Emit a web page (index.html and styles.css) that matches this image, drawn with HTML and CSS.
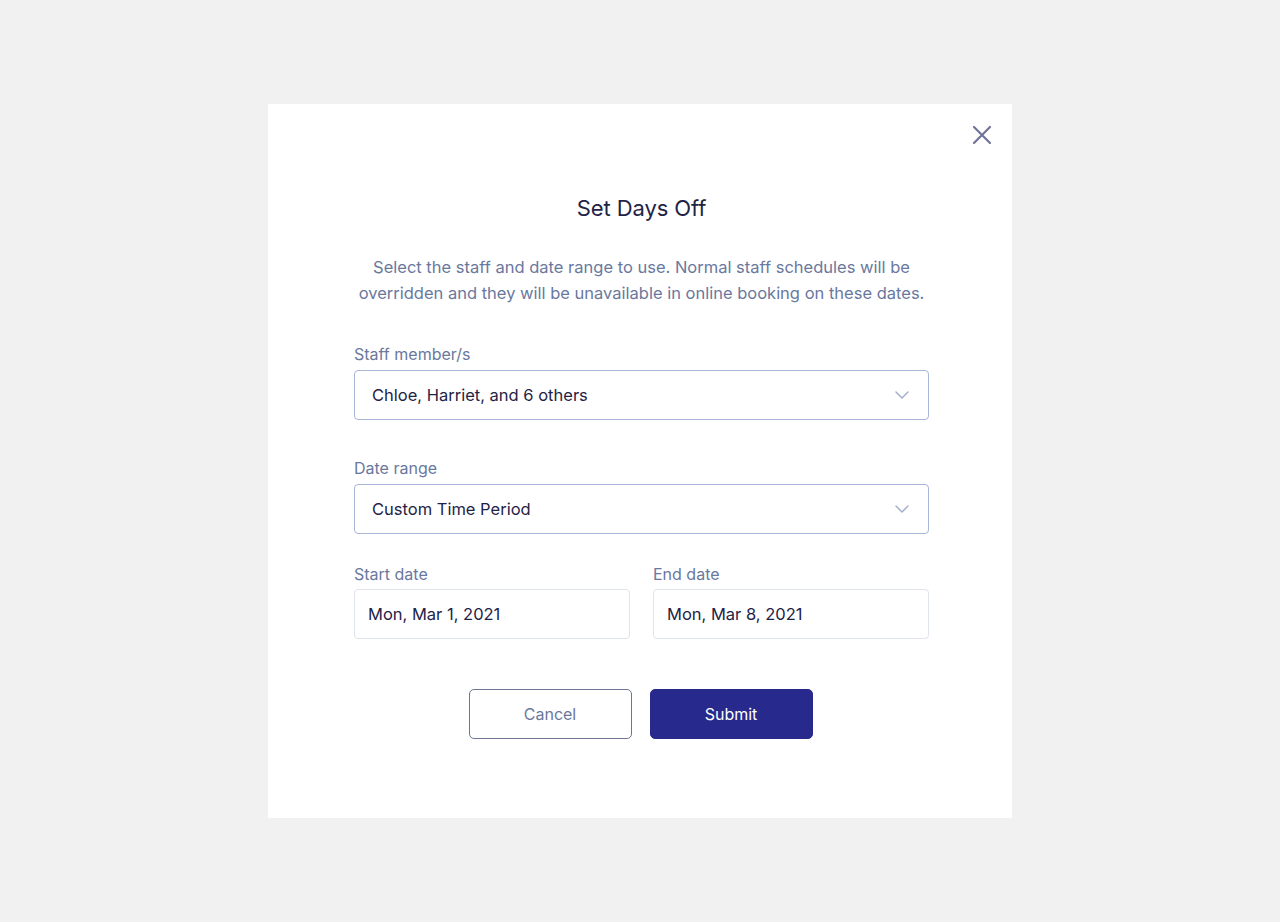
FILE: index.html
```html
<!DOCTYPE html>
<html lang="en">
<head>
<meta charset="utf-8">
<title>Set Days Off</title>
<link rel="stylesheet" href="styles.css">
</head>
<body>
<div class="page">
  <div class="modal">
    <button class="close" aria-label="Close">
      <svg width="20" height="20" viewBox="0 0 20 20"><path d="M2 2 L18 18 M18 2 L2 18" stroke="#6e7496" stroke-width="2.2" stroke-linecap="round" fill="none"/></svg>
    </button>
    <h1 class="title">Set Days Off</h1>
    <p class="desc">Select the staff and date range to use. Normal staff schedules will be overridden and they will be unavailable in online booking on these dates.</p>
    <div class="form">
      <div class="field">
        <label class="label">Staff member/s</label>
        <div class="select">
          <span>Chloe, Harriet, and 6 others</span>
          <svg class="chev" width="14" height="8" viewBox="0 0 14 8"><path d="M1 1 L7 7 L13 1" stroke="#a4b0cc" stroke-width="1.5" fill="none" stroke-linecap="round" stroke-linejoin="round"/></svg>
        </div>
      </div>
      <div class="field">
        <label class="label">Date range</label>
        <div class="select">
          <span>Custom Time Period</span>
          <svg class="chev" width="14" height="8" viewBox="0 0 14 8"><path d="M1 1 L7 7 L13 1" stroke="#a4b0cc" stroke-width="1.5" fill="none" stroke-linecap="round" stroke-linejoin="round"/></svg>
        </div>
      </div>
      <div class="dates">
        <div class="field">
          <label class="label label-date">Start date</label>
          <div class="input">Mon, Mar 1, 2021</div>
        </div>
        <div class="field">
          <label class="label label-date">End date</label>
          <div class="input">Mon, Mar 8, 2021</div>
        </div>
      </div>
    </div>
    <div class="actions">
      <button class="btn btn-cancel">Cancel</button>
      <button class="btn btn-submit">Submit</button>
    </div>
  </div>
</div>
</body>
</html>
```
FILE: styles.css
```css
* { box-sizing: border-box; }
html, body { margin: 0; padding: 0; }
body {
  background: #f1f1f1;
  font-family: "Inter", "Noto Sans", "Liberation Sans", sans-serif;
  color: #1f2346;
}
.page {
  width: 1280px;
  height: 922px;
  padding-top: 104px;
  display: flex;
  justify-content: center;
  align-items: flex-start;
}
.modal {
  position: relative;
  width: 744px;
  height: 714px;
  background: #ffffff;
  padding: 86px 83px 0 86px;
}
.close {
  position: absolute;
  top: 21px;
  right: 20px;
  width: 20px;
  height: 20px;
  padding: 0;
  border: 0;
  background: transparent;
  cursor: pointer;
}
.close svg { display: block; }
.title {
  margin: 0;
  font-size: 22px;
  font-weight: 400;
  line-height: 36px;
  text-align: center;
  color: #1f2346;
  letter-spacing: -0.1px;
}
.desc {
  margin: 28px 0 0;
  font-size: 16.5px;
  line-height: 26px;
  text-align: center;
  color: #6a789e;
}
.form {
  margin-top: 38px;
  display: flex;
  flex-direction: column;
  gap: 38px;
}
.field {
  display: flex;
  flex-direction: column;
}
.label {
  font-size: 16px;
  line-height: 20px;
  color: #6a789e;
  margin-bottom: 6px;
}
.label-date { margin-bottom: 5px; }
.select {
  height: 50px;
  border: 1px solid #a9b6d8;
  border-radius: 4px;
  display: flex;
  align-items: center;
  justify-content: space-between;
  padding: 0 19px 0 17px;
  font-size: 16.5px;
  color: #1f2346;
}
.dates {
  display: grid;
  grid-template-columns: 1fr 1fr;
  gap: 23px;
  margin-top: -8px;
}
.input {
  height: 50px;
  border: 1px solid #dfe3ee;
  border-radius: 4px;
  display: flex;
  align-items: center;
  padding: 0 13px;
  font-size: 16.5px;
  color: #1f2346;
}
.actions {
  margin-top: 50px;
  display: flex;
  justify-content: center;
  gap: 18px;
  padding-right: 2px;
}
.btn {
  width: 163px;
  height: 50px;
  border-radius: 5px;
  font-family: inherit;
  font-size: 16px;
  cursor: pointer;
}
.btn-cancel {
  background: #ffffff;
  border: 1px solid #6e7496;
  color: #6a789e;
}
.btn-submit {
  background: #272a8c;
  border: 1px solid #272a8c;
  color: #ffffff;
}
```
